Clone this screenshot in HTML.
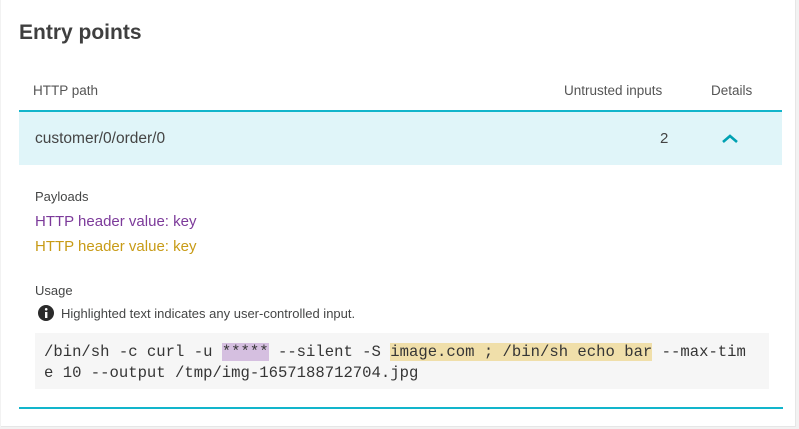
<!DOCTYPE html>
<html><head><meta charset="utf-8"><style>
body{margin:0;width:799px;height:429px;background:#f2f2f2;font-family:"Liberation Sans",sans-serif;color:#454646;position:relative;overflow:hidden}
.card{position:absolute;left:1px;top:0;width:794px;height:426px;background:#fff;border-right:1px solid #e6e6e6;border-bottom:1px solid #e6e6e6}
.abs{position:absolute;white-space:nowrap}
h1{position:absolute;left:19px;top:21px;margin:0;font-size:21px;font-weight:bold;color:#3f3f3f}
.th{font-size:13.5px;color:#555;top:83px}
.row{position:absolute;left:19px;top:110px;width:763px;height:55px;background:#e0f5f9;border-top:2px solid #12b5cb;box-sizing:border-box}
.code{position:absolute;left:35px;top:333px;width:734px;height:56px;background:#f6f6f6}
.code pre{margin:0;position:absolute;left:9px;top:9px;font-family:"Liberation Mono",monospace;font-size:15.6px;line-height:21px;color:#353535;white-space:pre}
.p{background:#d5bfe0}.y{background:#f0dfaa}
</style></head><body>
<div class="card"></div>
<h1>Entry points</h1>
<div class="abs th" style="left:33px">HTTP path</div>
<div class="abs th" style="left:564px">Untrusted inputs</div>
<div class="abs th" style="left:711px">Details</div>
<div class="row"></div>
<div class="abs" style="left:35px;top:130px;font-size:15.5px;color:#444">customer/0/order/0</div>
<div class="abs" style="left:660px;top:130px;font-size:15px;color:#444">2</div>
<svg class="abs" style="left:721px;top:133px" width="18" height="12"><path d="M2 9 L9 3 L16 9" stroke="#00a1b2" stroke-width="2.6" fill="none"/></svg>
<div class="abs" style="left:35px;top:189px;font-size:13px;color:#454646">Payloads</div>
<div class="abs" style="left:35px;top:213px;font-size:15px;color:#7c3a9a">HTTP header value: key</div>
<div class="abs" style="left:35px;top:238px;font-size:15px;color:#c89b16">HTTP header value: key</div>
<div class="abs" style="left:35px;top:283px;font-size:13px;color:#454646">Usage</div>
<svg class="abs" style="left:38px;top:305px" width="16" height="16"><circle cx="8" cy="8" r="8" fill="#2b2b2b"/><rect x="7" y="7" width="2.4" height="6" fill="#fff"/><circle cx="8.2" cy="4.3" r="1.3" fill="#fff"/></svg>
<div class="abs" style="left:61px;top:306px;font-size:13px;color:#454646">Highlighted text indicates any user-controlled input.</div>
<div class="code"><pre>/bin/sh -c curl -u <span class="p">*****</span> --silent -S <span class="y">image.com ; /bin/sh echo bar</span> --max-tim
e 10 --output /tmp/img-1657188712704.jpg</pre></div>
<div class="abs" style="left:19px;top:407px;width:764px;height:2px;background:#12b5cb"></div>
</body></html>
